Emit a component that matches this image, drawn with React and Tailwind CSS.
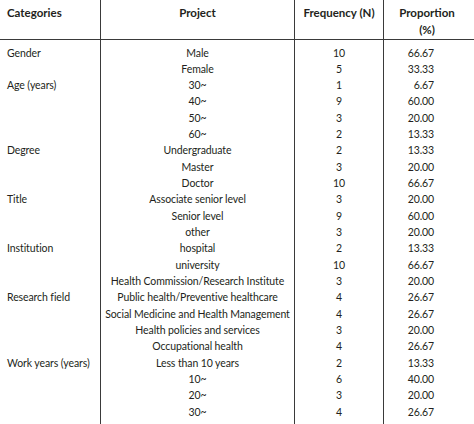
import React from "react";

const rows = [
  ["Gender", "Male", "10", "66.67"],
  ["", "Female", "5", "33.33"],
  ["Age (years)", "30~", "1", "6.67"],
  ["", "40~", "9", "60.00"],
  ["", "50~", "3", "20.00"],
  ["", "60~", "2", "13.33"],
  ["Degree", "Undergraduate", "2", "13.33"],
  ["", "Master", "3", "20.00"],
  ["", "Doctor", "10", "66.67"],
  ["Title", "Associate senior level", "3", "20.00"],
  ["", "Senior level", "9", "60.00"],
  ["", "other", "3", "20.00"],
  ["Institution", "hospital", "2", "13.33"],
  ["", "university", "10", "66.67"],
  ["", "Health Commission/Research Institute", "3", "20.00"],
  ["Research field", "Public health/Preventive healthcare", "4", "26.67"],
  ["", "Social Medicine and Health Management", "4", "26.67"],
  ["", "Health policies and services", "3", "20.00"],
  ["", "Occupational health", "4", "26.67"],
  ["Work years (years)", "Less than 10 years", "2", "13.33"],
  ["", "10~", "6", "40.00"],
  ["", "20~", "3", "20.00"],
  ["", "30~", "4", "26.67"],
];

export default function App() {
  return (
    <div
      className="w-[474px] h-[424px] overflow-hidden bg-white text-[#231f20] text-[10.5px] tracking-[-0.1px]"
      style={{ fontFamily: "Lato, 'Noto Sans', sans-serif" }}
    >
      <div className="grid grid-cols-[101px_194px_89px_1fr] border-b border-[#3a3a3a] h-[40px] font-bold text-[11.5px] tracking-normal leading-[17px]">
        <div className="border-r border-[#3a3a3a] pl-[7px] pt-[4px]">Categories</div>
        <div className="border-r border-[#3a3a3a] text-center pt-[4px]">Project</div>
        <div className="border-r border-[#3a3a3a] text-center pt-[4px]">Frequency (N)</div>
        <div className="text-center pt-[4px] pr-[4px]">
          <div>Proportion</div>
          <div>(%)</div>
        </div>
      </div>
      <div className="grid grid-cols-[101px_194px_89px_1fr] h-[384px]">
        <div className="border-r border-[#3a3a3a] pt-[4.5px]">
          {rows.map((r, i) => (
            <div key={i} className="h-[16.33px] leading-[16.33px] pl-[7px] whitespace-nowrap">{r[0]}</div>
          ))}
        </div>
        <div className="border-r border-[#3a3a3a] pt-[4.5px]">
          {rows.map((r, i) => (
            <div key={i} className="h-[16.33px] leading-[16.33px] text-center whitespace-nowrap">{r[1]}</div>
          ))}
        </div>
        <div className="border-r border-[#3a3a3a] pt-[4.5px]">
          {rows.map((r, i) => (
            <div key={i} className="h-[16.33px] leading-[16.33px] text-center">{r[2]}</div>
          ))}
        </div>
        <div className="pt-[4.5px]">
          {rows.map((r, i) => (
            <div key={i} className="h-[16.33px] leading-[16.33px] text-right pr-[40px]">{r[3]}</div>
          ))}
        </div>
      </div>
    </div>
  );
}
